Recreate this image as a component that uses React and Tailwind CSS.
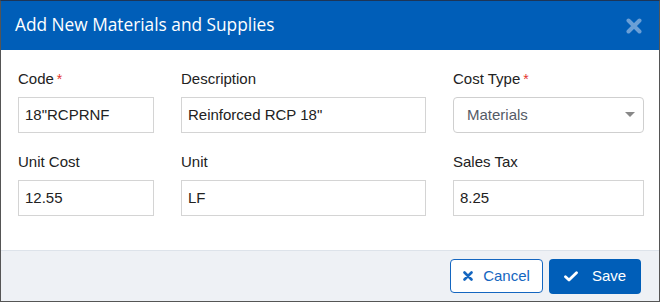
import React from 'react';

const Label = ({ text, required }) => (
  <div className="h-5 leading-5 text-[15px] text-[#222]">
    {text}
    {required && <span className="text-[#e3342f] ml-[3px] text-[14px]">*</span>}
  </div>
);

const TextInput = ({ value }) => (
  <div className="h-9 border border-[#d4d4d4] bg-white flex items-center px-[6px] text-[15px] text-[#222]">
    {value}
  </div>
);

const App = () => {
  return (
    <div className="w-[660px] h-[302px] bg-white border-x border-b border-[#555] border-t border-t-[#1d3557] flex flex-col font-['Liberation_Sans']">
      {/* header */}
      <div className="h-[49px] bg-[#005eb8] flex items-center justify-between pl-[14px] pr-[16px]">
        <h1 className="text-white text-[17.3px] font-['Open_Sans'] pb-[1px]">
          Add New Materials and Supplies
        </h1>
        <svg width="16" height="16" viewBox="0 0 16 16" className="mr-[1px]">
          <path d="M2.5 2.5 L13.5 13.5 M13.5 2.5 L2.5 13.5" stroke="#6b9fd6" strokeWidth="4" strokeLinecap="round" />
        </svg>
      </div>

      {/* body */}
      <div className="flex-1 pt-[19px] pl-[17px]">
        <div className="grid grid-cols-[136px_245px_191px] gap-x-[27px] gap-y-[19px]">
          <div className="flex flex-col gap-2">
            <Label text="Code" required />
            <TextInput value={'18"RCPRNF'} />
          </div>
          <div className="flex flex-col gap-2">
            <Label text="Description" />
            <TextInput value={'Reinforced RCP 18"'} />
          </div>
          <div className="flex flex-col gap-2">
            <Label text="Cost Type" required />
            <div className="h-9 border border-[#cfcfcf] rounded-[4px] bg-white flex items-center justify-between pl-[13px] pr-[8px] text-[15px] text-[#555b66]">
              <span>Materials</span>
              <svg width="10" height="6" viewBox="0 0 10 6">
                <path d="M0 0 L10 0 L5 5 Z" fill="#888" />
              </svg>
            </div>
          </div>
          <div className="flex flex-col gap-2">
            <Label text="Unit Cost" />
            <TextInput value="12.55" />
          </div>
          <div className="flex flex-col gap-2">
            <Label text="Unit" />
            <TextInput value="LF" />
          </div>
          <div className="flex flex-col gap-2">
            <Label text="Sales Tax" />
            <TextInput value="8.25" />
          </div>
        </div>
      </div>

      {/* footer */}
      <div className="h-[51px] bg-[#eef1f5] border-t border-[#dde3ea] flex items-center justify-end gap-[6px] pr-[18px]">
        <button className="h-[34px] w-[93px] rounded-[4px] border border-[#1466c0] bg-white flex items-center justify-center gap-[10px] text-[15px] text-[#1466c0]">
          <svg width="10" height="10" viewBox="0 0 10 10">
            <path d="M1.5 1.5 L8.5 8.5 M8.5 1.5 L1.5 8.5" stroke="#1466c0" strokeWidth="2.6" strokeLinecap="round" />
          </svg>
          Cancel
        </button>
        <button className="h-[35px] w-[92px] rounded-[4px] bg-[#005eb8] flex items-center justify-center gap-[14px] text-[15px] text-white">
          <svg width="14" height="11" viewBox="0 0 14 11">
            <path d="M1.5 5.8 L5 9 L12.5 1.8" stroke="white" strokeWidth="2.8" fill="none" strokeLinecap="round" strokeLinejoin="round" />
          </svg>
          Save
        </button>
      </div>
    </div>
  );
};

export default App;
